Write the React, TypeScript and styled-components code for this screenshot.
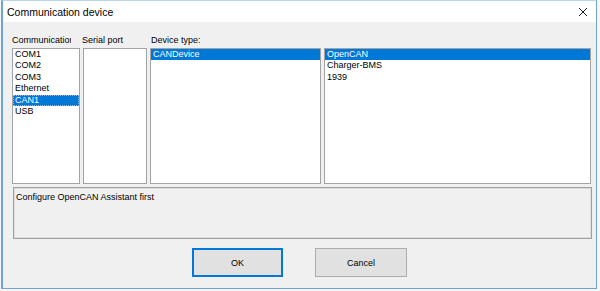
import React from "react";
import styled, { createGlobalStyle } from "styled-components";

const Global = createGlobalStyle`
  html, body { margin: 0; padding: 0; background: #ffffff; }
  body { width: 600px; height: 291px; overflow: hidden; font-family: "Liberation Sans", Arial, sans-serif; }
`;

const Page = styled.div`
  width: 600px;
  height: 291px;
  padding-left: 1px;
  box-sizing: border-box;
  background: #f7f7f7;
`;

const Window = styled.div`
  width: 596px;
  height: 289px;
  box-sizing: border-box;
  border: 1px solid #6ea3d9;
  border-top-color: #b9d3ee;
  border-left-width: 2px;
  background: #f0f0f0;
  display: flex;
  flex-direction: column;
`;

const TitleBar = styled.div`
  height: 21px;
  flex: none;
  background: #ffffff;
  display: flex;
  align-items: center;
  justify-content: space-between;
  padding: 0 8px 0 4px;
`;

const Title = styled.span`
  font-size: 10.5px;
  color: #000;
  padding-top: 1px;
`;

const CloseIcon = styled.svg`
  width: 10px;
  height: 10px;
  display: block;
`;

const Body = styled.div`
  flex: 1;
  display: flex;
  flex-direction: column;
  padding: 12px 4px 0 9px;
`;

const Grid = styled.div`
  display: grid;
  grid-template-columns: 68px 64px 171px 267px;
  grid-template-rows: 14px 136px;
  column-gap: 3px;
`;

const Label = styled.div<{ $shift?: number; $clip?: number }>`
  font-size: 9px;
  color: #000;
  white-space: nowrap;
  overflow: hidden;
  margin-left: ${(p) => p.$shift ?? 0}px;
  width: ${(p) => (p.$clip ? `${p.$clip}px` : "auto")};
  line-height: 12px;
`;

const ListBox = styled.div`
  grid-row: 2;
  background: #ffffff;
  border: 1px solid #a3a3a3;
  box-sizing: border-box;
  padding: 0;
  overflow: hidden;
`;

const Item = styled.div<{ $selected?: boolean; $focus?: boolean }>`
  height: 11.4px;
  line-height: 11.4px;
  font-size: 9px;
  padding-left: 2px;
  white-space: nowrap;
  color: ${(p) => (p.$selected ? "#ffffff" : "#000000")};
  background: ${(p) => (p.$selected ? "#0078d7" : "transparent")};
  outline: ${(p) => (p.$focus ? "1px dotted #8fb8e6" : "none")};
  outline-offset: -1px;
`;

const Status = styled.div`
  margin-top: 3px;
  margin-left: 1px;
  height: 52px;
  box-sizing: border-box;
  border: 1px solid #a0a0a0;
  box-shadow: inset 1px 1px 0 #dcdcdc, inset -1px -1px 0 #dcdcdc;
  font-size: 9px;
  padding: 3px 2px;
  line-height: 12px;
  color: #000;
`;

const Buttons = styled.div`
  display: flex;
  justify-content: center;
  gap: 32px;
  margin-top: 9px;
  padding-right: 5px;
`;

const Button = styled.div<{ $default?: boolean }>`
  width: ${(p) => (p.$default ? 91 : 92)}px;
  height: 29px;
  box-sizing: border-box;
  background: #e1e1e1;
  border: ${(p) => (p.$default ? "2px solid #0078d7" : "1px solid #adadad")};
  display: flex;
  align-items: center;
  justify-content: center;
  font-size: 9px;
  color: #000;
`;

const comms = ["COM1", "COM2", "COM3", "Ethernet", "CAN1", "USB"];
const devices = ["OpenCAN", "Charger-BMS", "1939"];

export default function App() {
  return (
    <>
      <Global />
      <Page>
        <Window>
          <TitleBar>
            <Title>Communication device</Title>
            <CloseIcon viewBox="0 0 10 10">
              <path d="M1 1 L9 9 M9 1 L1 9" stroke="#1a1a1a" strokeWidth="1" fill="none" />
            </CloseIcon>
          </TitleBar>
          <Body>
            <Grid>
              <Label $clip={59}>Communication</Label>
              <Label $shift={-1}>Serial port</Label>
              <Label $shift={1}>Device type:</Label>
              <div />
              <ListBox>
                {comms.map((c) => (
                  <Item key={c} $selected={c === "CAN1"} $focus={c === "CAN1"}>
                    {c}
                  </Item>
                ))}
              </ListBox>
              <ListBox />
              <ListBox>
                <Item $selected>CANDevice</Item>
              </ListBox>
              <ListBox>
                {devices.map((d, i) => (
                  <Item key={d} $selected={i === 0}>
                    {d}
                  </Item>
                ))}
              </ListBox>
            </Grid>
            <Status>Configure OpenCAN Assistant first</Status>
            <Buttons>
              <Button $default>OK</Button>
              <Button>Cancel</Button>
            </Buttons>
          </Body>
        </Window>
      </Page>
    </>
  );
}
